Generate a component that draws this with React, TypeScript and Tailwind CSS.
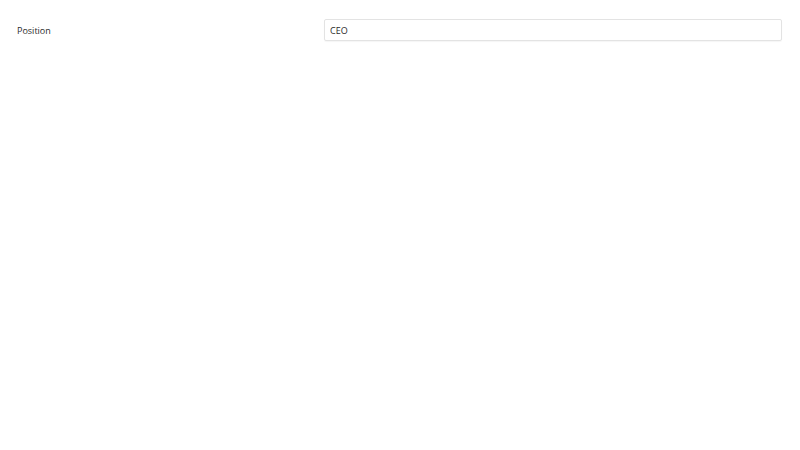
export default function App() {
  return (
    <div className="w-[800px] h-[450px] bg-white font-['Open_Sans',sans-serif]">
      <div className="flex items-center pt-[19px] pl-[17px] pr-[18px]">
        <label className="w-[307px] pt-[2px] text-[9px] text-[#2b2b2b]">Position</label>
        <input
          className="flex-1 h-[22px] px-[5px] text-[9px] text-[#2b2b2b] border border-[#e3e3e3] rounded-[2px] shadow-[0_1px_1px_rgba(0,0,0,0.04)] outline-none"
          defaultValue="CEO"
        />
      </div>
    </div>
  );
}
